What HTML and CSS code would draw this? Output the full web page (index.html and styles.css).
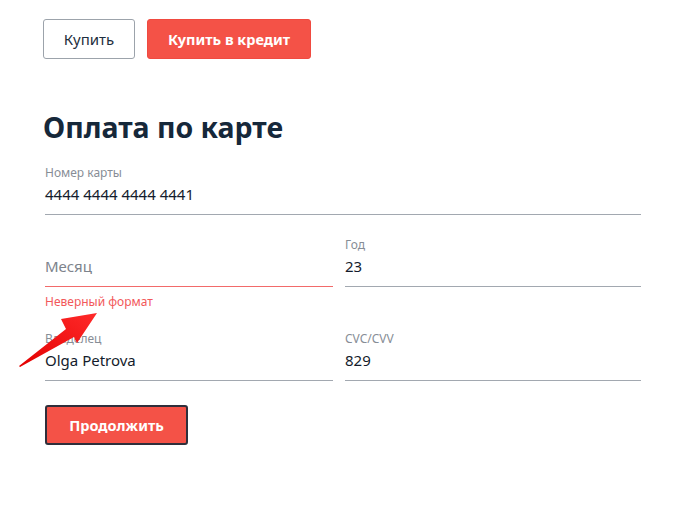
FILE: index.html
```html
<!DOCTYPE html>
<html lang="ru">
<head>
<meta charset="utf-8">
<link rel="stylesheet" href="styles.css">
</head>
<body>
<div class="page">
  <div class="actions">
    <button class="btn btn-outline">Купить</button>
    <button class="btn btn-primary">Купить в кредит</button>
  </div>
  <h1 class="title">Оплата по карте</h1>
  <form class="form">
    <div class="field">
      <div class="label">Номер карты</div>
      <div class="value">4444 4444 4444 4441</div>
    </div>
    <div class="row">
      <div class="col">
        <div class="field field-error">
          <div class="label">&nbsp;</div>
          <div class="value placeholder">Месяц</div>
        </div>
        <div class="error">Неверный формат</div>
      </div>
      <div class="col">
        <div class="field">
          <div class="label">Год</div>
          <div class="value">23</div>
        </div>
      </div>
    </div>
    <div class="row row-next">
      <div class="col">
        <div class="field">
          <div class="label">Владелец</div>
          <div class="value">Olga Petrova</div>
        </div>
      </div>
      <div class="col">
        <div class="field">
          <div class="label">CVC/CVV</div>
          <div class="value">829</div>
        </div>
      </div>
    </div>
    <button type="button" class="btn btn-primary btn-submit">Продолжить</button>
  </form>
  <svg class="arrow" width="100" height="70" viewBox="0 0 100 70">
    <defs>
      <linearGradient id="ag" x1="0" y1="1" x2="1" y2="0">
        <stop offset="0" stop-color="#e30000"/>
        <stop offset="1" stop-color="#ff2a2a"/>
      </linearGradient>
    </defs>
    <polygon points="8,66 55,29 50,19 86,13 66,43 63,37 9,67" fill="url(#ag)"/>
  </svg>
</div>
</body>
</html>
```
FILE: styles.css
```css
* { box-sizing: border-box; }
html, body { margin: 0; background: #fff; }
body {
  font-family: "Noto Sans", "Open Sans", sans-serif;
  color: #1b2a3a;
}
.page {
  position: relative;
  padding: 19px 0 0 43px;
  width: 697px;
  height: 514px;
}
.actions {
  display: flex;
  gap: 12px;
}
.btn {
  font-family: "Noto Sans", "Open Sans", sans-serif;
  height: 40px;
  border-radius: 3px;
  cursor: pointer;
}
.btn-outline {
  width: 92px;
  background: #fff;
  border: 1px solid #9ca3ab;
  color: #1e2f40;
  font-size: 15px;
}
.btn-primary {
  width: 164px;
  background: #f45247;
  border: 1px solid #f04a40;
  color: #fff;
  font-weight: 700;
  font-size: 14.5px;
}
.title {
  margin: 51px 0 0 0;
  font-size: 28.5px;
  line-height: 34px;
  font-weight: 700;
  color: #16283a;
}
.form {
  margin: 21px 0 0 2px;
  width: 596px;
}
.field {
  border-bottom: 1px solid #a2a8b0;
  padding-bottom: 9px;
}
.field-error { border-bottom-color: #f26a6a; }
.label {
  font-size: 12px;
  line-height: 16px;
  color: #878d96;
}
.value {
  font-size: 15px;
  line-height: 22px;
  margin-top: 2px;
  color: #141c2c;
}
.placeholder { color: #7d838c; }
.row {
  display: grid;
  grid-template-columns: 288px 1fr;
  gap: 12px;
  margin-top: 22px;
}
.row-next { margin-top: 0; }
.error {
  font-size: 12px;
  line-height: 16px;
  color: #f2585a;
  margin-top: 7px;
  height: 37px;
}
.btn-submit {
  margin-top: 24px;
  width: 143px;
  height: 40px;
  border: 2px solid #2f2f3b;
}
.arrow {
  position: absolute;
  left: 11px;
  top: 300px;
}
```
